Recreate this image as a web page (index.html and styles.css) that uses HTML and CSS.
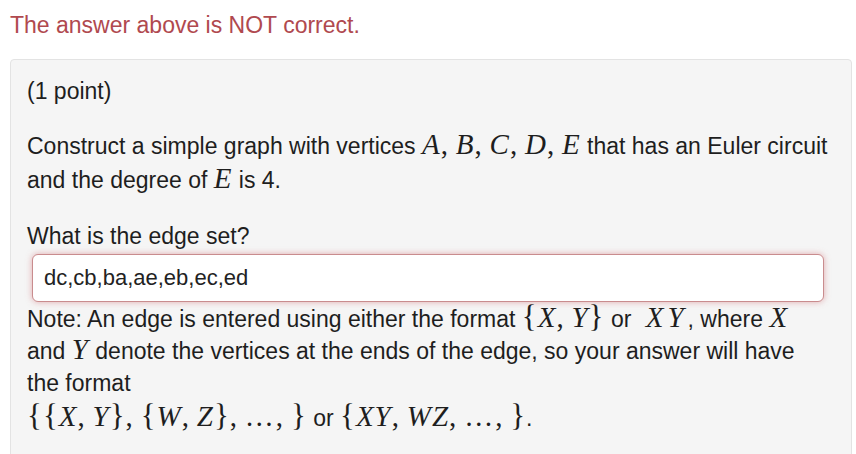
FILE: index.html
```html
<!DOCTYPE html>
<html>
<head>
<meta charset="utf-8">
<link rel="stylesheet" href="styles.css">
</head>
<body>
<div class="page">
  <div class="verdict">The answer above is NOT correct.</div>
  <div class="problem">
    <div class="points">(1 point)</div>
    <p class="stmt">Construct a simple graph with vertices <span class="m">A<span class="p">,</span>&#8201;B<span class="p">,</span>&#8201;C<span class="p">,</span>&#8201;D<span class="p">,</span>&#8201;E</span> that has an Euler circuit and the degree of <span class="m">E</span> is 4.</p>
    <div class="q">What is the edge set?</div>
    <div class="answer">dc,cb,ba,ae,eb,ec,ed</div>
    <p class="note">Note: An edge is entered using either the format <span class="m"><span class="br">{</span>X<span class="p">,</span>&#8201;Y<span class="br">}</span></span> or <span class="m xy">XY</span>, where <span class="m wide">X</span> and <span class="m">Y</span> denote the vertices at the ends of the edge, so your answer will have the format</p>
    <div class="formula"><span class="m"><span class="br">{{</span>X<span class="p">,</span>&#8201;Y<span class="br">}</span><span class="p">,</span>&#8201;<span class="br">{</span>W<span class="p">,</span>&#8201;Z<span class="br">}</span><span class="p">,</span>&#8201;<span class="up">…</span><span class="p">,</span>&#8201;<span class="br">}</span></span> or <span class="m"><span class="br">{</span>XY<span class="p">,</span>&#8201;WZ<span class="p">,</span>&#8201;<span class="up">…</span><span class="p">,</span>&#8201;<span class="br">}</span></span>.</div>
  </div>
</div>
</body>
</html>
```

FILE: styles.css
```css
html, body {
  margin: 0;
  padding: 0;
  background: #ffffff;
}
body {
  font-family: "Liberation Sans", Arial, sans-serif;
  font-size: 23px;
  color: #1e1e1e;
}
.page {
  padding: 8px 4px 0 10px;
}
.verdict {
  color: #b0494f;
  font-size: 23px;
  line-height: 34px;
  margin-bottom: 17px;
}
.problem {
  background: #f5f5f5;
  border: 1px solid #e3e3e3;
  border-radius: 4px;
  padding: 14px 20px 20px 16px;
  min-height: 380px;
}
.points {
  line-height: 34px;
}
.stmt {
  margin: 21px 0 22px 0;
  line-height: 34px;
}
.q {
  line-height: 34px;
}
.answer {
  margin: 1px 7px 1px 5px;
  height: 46px;
  border: 1px solid #c98c8e;
  border-radius: 6px;
  background: #ffffff;
  box-shadow: 0 0 6px rgba(210, 110, 115, 0.55);
  padding: 0 11px;
  line-height: 46px;
  font-size: 22px;
  color: #222;
}
.note {
  margin: 0;
  line-height: 32px;
}
.formula {
  line-height: 38px;
}
.m {
  font-family: "Liberation Serif", "Times New Roman", serif;
  font-style: italic;
  font-size: 29px;
  line-height: 20px;
  letter-spacing: 1px;
  white-space: nowrap;
}
.xy {
  letter-spacing: 4px;
  margin-left: 8px;
}
.wide {
  letter-spacing: 3px;
}
.m .p, .m .br, .m .up {
  font-style: normal;
}
.m .up {
  letter-spacing: 2px;
}
.m .br {
  font-size: 31px;
}
```
